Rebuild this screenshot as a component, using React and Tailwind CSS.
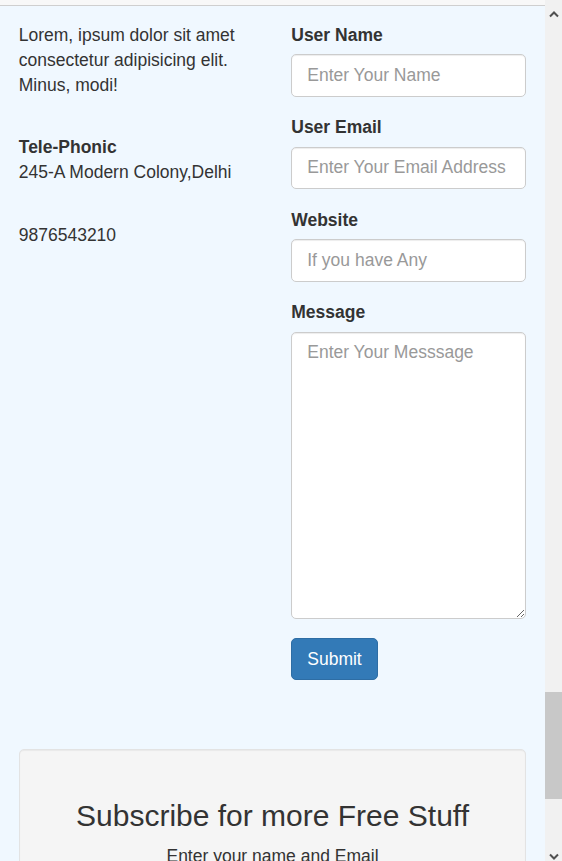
import React from "react";

const inputCls =
  "block w-full h-[42.5px] px-[15px] bg-white border border-[#ccc] rounded-[5px] shadow-[inset_0_1px_1px_rgba(0,0,0,0.075)] text-[#555] placeholder:text-[#999] outline-none";

const Field = ({ label, placeholder }) => (
  <div className="mb-[18.75px]">
    <label className="block font-bold mb-[6.25px]">{label}</label>
    <input type="text" placeholder={placeholder} className={inputCls} />
  </div>
);

const Chevron = ({ down }) => (
  <svg width="10" height="7" viewBox="0 0 10 7" className="block">
    <path
      d={down ? "M1 1.5 L5 5.5 L9 1.5" : "M1 5.5 L5 1.5 L9 5.5"}
      fill="none"
      stroke="#505050"
      strokeWidth="2"
    />
  </svg>
);

const App = () => {
  return (
    <div className="flex h-[861px] overflow-hidden font-['Liberation_Sans',Arial,sans-serif] text-[#333] text-[17.5px] leading-[25px]">
      <div className="flex-1 min-w-0 flex flex-col">
        <div className="h-[6px] shrink-0 bg-[#f8f8f8] border-b border-[#cfcfcf]" />
        <div className="flex-1 shrink-0 bg-[#f0f8ff] px-[18.75px] pt-[16.75px]">
          <div className="flex">
            <div className="w-1/2 pr-[18.75px]">
              <p className="mb-[37.5px]">
                Lorem, ipsum dolor sit amet consectetur adipisicing elit. Minus,
                modi!
              </p>
              <div className="font-bold">Tele-Phonic</div>
              <div>245-A Modern Colony,Delhi</div>
              <div className="mt-[37.5px]">9876543210</div>
            </div>
            <form className="w-1/2 pl-[18.75px]">
              <Field label="User Name" placeholder="Enter Your Name" />
              <Field label="User Email" placeholder="Enter Your Email Address" />
              <Field label="Website" placeholder="If you have Any" />
              <div className="mb-[18.75px]">
                <label className="block font-bold mb-[6.25px]">Message</label>
                <textarea
                  placeholder="Enter Your Messsage"
                  className="block w-full h-[287.5px] px-[15px] py-[7.5px] bg-white border border-[#ccc] rounded-[5px] shadow-[inset_0_1px_1px_rgba(0,0,0,0.075)] text-[#555] placeholder:text-[#999] outline-none resize"
                />
              </div>
              <button
                type="button"
                className="h-[42.5px] px-[15px] bg-[#337ab7] border border-[#2e6da4] rounded-[5px] text-white"
              >
                Submit
              </button>
            </form>
          </div>
          <div className="mt-[68.5px] bg-[#f5f5f5] border border-[#e3e3e3] rounded-[5px] p-[23.75px] shadow-[inset_0_1px_1px_rgba(0,0,0,0.05)] text-center">
            <h3 className="mt-[25px] mb-[12.5px] text-[30px] leading-[33px]">
              Subscribe for more Free Stuff
            </h3>
            <p>Enter your name and Email</p>
          </div>
        </div>
      </div>
      <div className="w-[17px] shrink-0 bg-[#f1f1f1] flex flex-col">
        <div className="h-[692px] flex justify-center pt-[11px]">
          <Chevron />
        </div>
        <div className="h-[107px] bg-[#c8c8c8]" />
        <div className="flex-1 flex justify-center items-end pb-[1px]">
          <Chevron down />
        </div>
      </div>
    </div>
  );
};

export default App;
